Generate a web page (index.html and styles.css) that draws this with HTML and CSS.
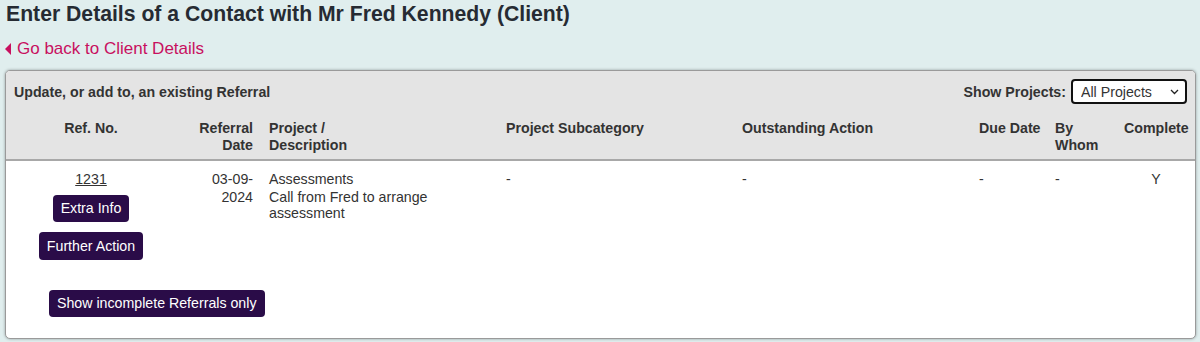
FILE: index.html
```html
<!DOCTYPE html>
<html lang="en">
<head>
<meta charset="utf-8">
<title>Enter Details of a Contact</title>
<link rel="stylesheet" href="styles.css">
</head>
<body>
<h1 class="title">Enter Details of a Contact with Mr Fred Kennedy (Client)</h1>
<a class="back" href="#"><span class="tri"></span>Go back to Client Details</a>
<div class="panel">
  <div class="toolbar">
    <span class="caption">Update, or add to, an existing Referral</span>
    <label class="filter">Show Projects:
      <span class="select-wrap">
        <select class="select"><option>All Projects</option></select>
        <svg class="chev" width="9" height="6" viewBox="0 0 9 6"><path d="M1 1 L4.5 4.5 L8 1" fill="none" stroke="#222" stroke-width="1.3"/></svg>
      </span>
    </label>
  </div>
  <table class="grid">
    <colgroup>
      <col class="c-ref"><col class="c-date"><col class="c-proj"><col class="c-sub"><col class="c-out"><col class="c-due"><col class="c-by"><col class="c-comp">
    </colgroup>
    <thead>
      <tr>
        <th class="center">Ref. No.</th>
        <th class="right">Referral Date</th>
        <th>Project /<br>Description</th>
        <th>Project Subcategory</th>
        <th>Outstanding Action</th>
        <th class="nowrap">Due Date</th>
        <th>By Whom</th>
        <th class="center">Complete</th>
      </tr>
    </thead>
    <tbody>
      <tr>
        <td class="center">
          <a class="ref" href="#">1231</a>
          <button class="btn btn-extra">Extra Info</button>
          <button class="btn btn-further">Further Action</button>
        </td>
        <td class="right">03-09-<br>2024</td>
        <td>Assessments<div class="desc">Call from Fred to arrange assessment</div></td>
        <td>-</td>
        <td>-</td>
        <td>-</td>
        <td>-</td>
        <td class="center">Y</td>
      </tr>
    </tbody>
  </table>
  <div class="footer">
    <button class="btn">Show incomplete Referrals only</button>
  </div>
</div>
</body>
</html>
```
FILE: styles.css
```css
html, body {
  margin: 0;
  padding: 0;
}
body {
  background: #e0eeee;
  font-family: "Liberation Sans", Arial, sans-serif;
  color: #333;
  padding: 0 4px 0 5px;
  height: 342px;
  box-sizing: border-box;
  overflow: hidden;
}
.title {
  margin: 0;
  padding: 2px 0 0 1px;
  font-size: 21.2px;
  line-height: 24px;
  font-weight: bold;
  color: #262b33;
}
.back {
  display: inline-flex;
  align-items: center;
  margin-top: 13px;
  color: #c8105f;
  font-size: 17px;
  line-height: 20px;
  text-decoration: none;
}
.tri {
  display: inline-block;
  width: 0;
  height: 0;
  border-top: 6px solid transparent;
  border-bottom: 6px solid transparent;
  border-right: 6px solid #c8105f;
  margin-right: 6px;
}
.panel {
  margin-top: 11px;
  background: #fff;
  border: 1px solid #9a9a9a;
  border-radius: 5px;
  box-shadow: 0 0 3px rgba(0,0,0,0.35);
  overflow: hidden;
  height: 269px;
  box-sizing: border-box;
}
.toolbar {
  display: flex;
  justify-content: space-between;
  align-items: center;
  background: #e4e4e4;
  padding: 8px 8px 5px 8px;
}
.caption, .filter {
  font-size: 14.2px;
  font-weight: bold;
  color: #333;
}
.filter {
  display: flex;
  align-items: center;
  gap: 5px;
}
.select-wrap {
  position: relative;
  display: inline-flex;
}
.select {
  appearance: none;
  -webkit-appearance: none;
  width: 116px;
  height: 25px;
  border: 2px solid #111;
  border-radius: 4px;
  background: #fff;
  font-family: "Liberation Sans", Arial, sans-serif;
  font-size: 14.2px;
  color: #333;
  padding: 0 3px 0 8px;
}
.chev {
  position: absolute;
  right: 8px;
  top: 10px;
  pointer-events: none;
}
.grid {
  width: 100%;
  border-collapse: collapse;
  table-layout: fixed;
  font-size: 14.2px;
  color: #333;
}
.c-ref { width: 170px; }
.c-date { width: 85px; }
.c-proj { width: 237px; }
.c-sub { width: 236px; }
.c-out { width: 237px; }
.c-due { width: 76px; }
.c-by { width: 69px; }
.c-comp { width: 80px; }
.grid th {
  background: #e4e4e4;
  font-weight: bold;
  text-align: left;
  vertical-align: top;
  padding: 11px 8px 5px 8px;
  line-height: 17px;
  border-bottom: 2px solid #a8a8a8;
}
.grid .nowrap { white-space: nowrap; }
.grid td {
  vertical-align: top;
  text-align: left;
  padding: 9px 8px 0 8px;
  line-height: 18px;
}
.grid .center { text-align: center; }
.grid .right { text-align: right; }
.desc { line-height: 16px; margin-top: 1px; }
.ref {
  color: #333;
  text-decoration: underline;
  display: block;
}
.btn {
  display: inline-block;
  background: #2a0c48;
  color: #fff;
  border: none;
  border-radius: 4px;
  font-family: "Liberation Sans", Arial, sans-serif;
  font-size: 14.2px;
  height: 27px;
  line-height: 27px;
  padding: 0 8px;
  vertical-align: top;
  cursor: pointer;
}
.btn-extra { margin-top: 7px; }
.btn-further { margin-top: 10px; height: 28px; line-height: 28px; }
.footer {
  padding: 30px 0 0 43px;
}
```
